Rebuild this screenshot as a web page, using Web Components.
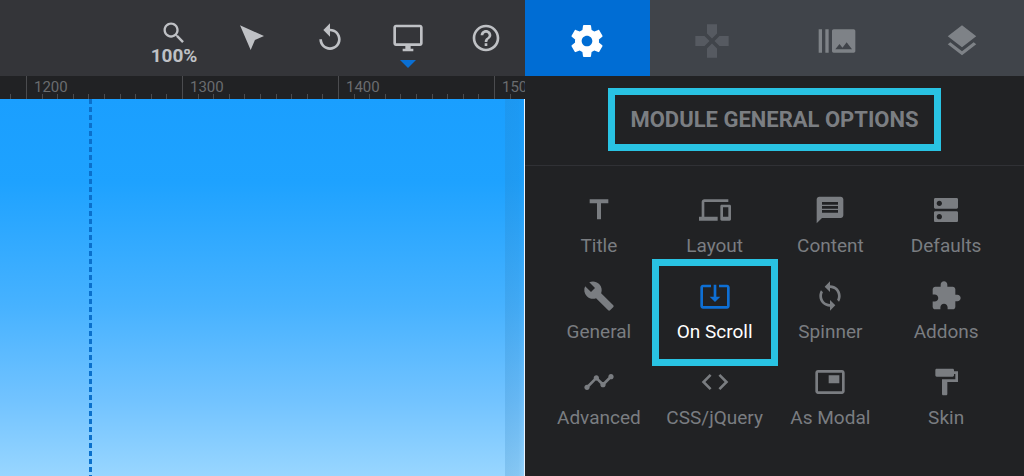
<!DOCTYPE html>
<html lang="en">
<head>
<meta charset="utf-8">
<title>Module editor</title>
<style>
html, body { height: 100%; margin: 0; }
body { background: #212224; font-family: Roboto, "Liberation Sans", sans-serif; }
</style>
</head>
<body>
<module-editor></module-editor>
<script>
const ICONS = {
  search: '<path d="M15.5 14h-.79l-.28-.27C15.41 12.59 16 11.11 16 9.5 16 5.91 13.09 3 9.5 3S3 5.91 3 9.5 5.91 16 9.5 16c1.61 0 3.09-.59 4.23-1.57l.27.28v.79l5 4.99L20.49 19l-4.99-5zm-6 0C7.01 14 5 11.99 5 9.5S7.01 5 9.5 5 14 7.01 14 9.5 11.99 14 9.5 14z"/>',
  cursor: '<path d="M3 2.5 21 10.5 14.2 13.5 11 21z"/>',
  undo: '<path d="M12 5V1L7 6l5 5V7c3.31 0 6 2.69 6 6s-2.69 6-6 6-6-2.69-6-6H4c0 4.42 3.58 8 8 8s8-3.58 8-8-3.58-8-8-8z"/>',
  desktop: '<path d="M21 2H3c-1.1 0-2 .9-2 2v12c0 1.1.9 2 2 2h7v2H8v2h8v-2h-2v-2h7c1.1 0 2-.9 2-2V4c0-1.1-.9-2-2-2zm0 14H3V4h18v12z"/>',
  help: '<path d="M11 18h2v-2h-2v2zm1-16C6.48 2 2 6.48 2 12s4.48 10 10 10 10-4.48 10-10S17.52 2 12 2zm0 18c-4.41 0-8-3.59-8-8s3.59-8 8-8 8 3.59 8 8-3.59 8-8 8zm0-14c-2.21 0-4 1.79-4 4h2c0-1.1.9-2 2-2s2 .9 2 2c0 2-3 1.75-3 5h2c0-2.25 3-2.5 3-5 0-2.21-1.79-4-4-4z"/>',
  gear: '<path d="M19.14 12.94c.04-.3.06-.61.06-.94 0-.32-.02-.64-.07-.94l2.03-1.58c.18-.14.23-.41.12-.61l-1.92-3.32c-.12-.22-.37-.29-.59-.22l-2.39.96c-.5-.38-1.03-.7-1.62-.94l-.36-2.54c-.04-.24-.24-.41-.48-.41h-3.84c-.24 0-.43.17-.47.41l-.36 2.54c-.59.24-1.13.57-1.62.94l-2.39-.96c-.22-.08-.47 0-.59.22L2.74 8.87c-.12.21-.08.47.12.61l2.03 1.58c-.05.3-.09.63-.09.94s.02.64.07.94l-2.03 1.58c-.18.14-.23.41-.12.61l1.92 3.32c.12.22.37.29.59.22l2.39-.96c.5.38 1.03.7 1.62.94l.36 2.54c.05.24.24.41.48.41h3.84c.24 0 .44-.17.47-.41l.36-2.54c.59-.24 1.13-.56 1.62-.94l2.39.96c.22.08.47 0 .59-.22l1.92-3.32c.12-.22.07-.47-.12-.61l-2.01-1.58zM12 15.2c-1.77 0-3.2-1.43-3.2-3.2s1.43-3.2 3.2-3.2 3.2 1.43 3.2 3.2-1.43 3.2-3.2 3.2z"/>',
  gamepad: '<path d="M15 7.5V2H9v5.5l3 3 3-3zM7.5 9H2v6h5.5l3-3-3-3zM9 16.5V22h6v-5.5l-3-3-3 3zM16.5 9l-3 3 3 3H22V9h-5.5z"/>',
  slides: '<path d="M1 5h2v14H1zm4 0h2v14H5zm17 0H10c-.55 0-1 .45-1 1v12c0 .55.45 1 1 1h12c.55 0 1-.45 1-1V6c0-.55-.45-1-1-1zM11 17l2.5-3.15L15.29 16l2.5-3.22L21 17H11z"/>',
  layers: '<path d="M11.99 18.54l-7.37-5.73L3 14.07l9 7 9-7-1.63-1.27-7.38 5.74zM12 16l7.36-5.73L21 9l-9-7-9 7 1.63 1.27L12 16z"/>',
  title: '<path d="M5 4v3h5.5v12h3V7H19V4z"/>',
  devices: '<path d="M4 6h18V4H4c-1.1 0-2 .9-2 2v11H0v3h14v-3H4V6zm19 2h-6c-.55 0-1 .45-1 1v10c0 .55.45 1 1 1h6c.55 0 1-.45 1-1V9c0-.55-.45-1-1-1zm-1 9h-4v-7h4v7z"/>',
  message: '<path d="M20 2H4c-1.1 0-1.99.9-1.99 2L2 22l4-4h14c1.1 0 2-.9 2-2V4c0-1.1-.9-2-2-2zm-2 12H6v-2h12v2zm0-3H6V9h12v2zm0-3H6V6h12v2z"/>',
  dns: '<path d="M20 13H4c-.55 0-1 .45-1 1v6c0 .55.45 1 1 1h16c.55 0 1-.45 1-1v-6c0-.55-.45-1-1-1zM7 19c-1.1 0-2-.9-2-2s.9-2 2-2 2 .9 2 2-.9 2-2 2zM20 3H4c-.55 0-1 .45-1 1v6c0 .55.45 1 1 1h16c.55 0 1-.45 1-1V4c0-.55-.45-1-1-1zM7 9c-1.1 0-2-.9-2-2s.9-2 2-2 2 .9 2 2-.9 2-2 2z"/>',
  wrench: '<path d="M22.7 19l-9.1-9.1c.9-2.3.4-5-1.5-6.9-2-2-5-2.4-7.4-1.3L9 6 6 9 1.6 4.7C.4 7.1.9 10.1 2.9 12.1c1.9 1.9 4.6 2.4 6.9 1.5l9.1 9.1c.4.4 1 .4 1.4 0l2.3-2.3c.5-.4.5-1.1.1-1.4z"/>',
  scroll: '<path d="M12 16.5l4-4h-3v-9h-2v9H8l4 4zm9-13h-6v1.99h6v14.03H3V5.49h6V3.5H3c-1.1 0-2 .9-2 2v14c0 1.1.9 2 2 2h18c1.1 0 2-.9 2-2v-14c0-1.1-.9-2-2-2z"/>',
  sync: '<path d="M12 4V1L8 5l4 4V6c3.31 0 6 2.69 6 6 0 1.01-.25 1.97-.7 2.8l1.46 1.46C19.54 15.03 20 13.57 20 12c0-4.42-3.58-8-8-8zm0 14c-3.31 0-6-2.69-6-6 0-1.01.25-1.97.7-2.8L5.24 7.74C4.46 8.97 4 10.43 4 12c0 4.42 3.58 8 8 8v3l4-4-4-4v3z"/>',
  puzzle: '<path d="M20.5 11H19V7c0-1.1-.9-2-2-2h-4V3.5C13 2.12 11.88 1 10.5 1S8 2.12 8 3.5V5H4c-1.1 0-1.99.9-1.99 2v3.8H3.5c1.49 0 2.7 1.21 2.7 2.7s-1.21 2.7-2.7 2.7H2V20c0 1.1.9 2 2 2h3.8v-1.5c0-1.49 1.21-2.7 2.7-2.7 1.49 0 2.7 1.21 2.7 2.7V22H17c1.1 0 2-.9 2-2v-4h1.5c1.38 0 2.5-1.12 2.5-2.5S21.88 11 20.5 11z"/>',
  timeline: '<path d="M23 8c0 1.1-.9 2-2 2-.18 0-.35-.02-.51-.07l-3.56 3.55c.05.16.07.34.07.52 0 1.1-.9 2-2 2s-2-.9-2-2c0-.18.02-.36.07-.52l-2.55-2.55c-.16.05-.34.07-.52.07s-.36-.02-.52-.07l-4.55 4.56c.05.16.07.33.07.51 0 1.1-.9 2-2 2s-2-.9-2-2 .9-2 2-2c.18 0 .35.02.51.07l4.56-4.55C8.02 9.36 8 9.18 8 9c0-1.1.9-2 2-2s2 .9 2 2c0 .18-.02.36-.07.52l2.55 2.55c.16-.05.34-.07.52-.07s.36.02.52.07l3.55-3.56C19.02 8.35 19 8.18 19 8c0-1.1.9-2 2-2s2 .9 2 2z"/>',
  code: '<path d="M9.4 16.6L4.8 12l4.6-4.6L8 6l-6 6 6 6 1.4-1.4zm5.2 0l4.6-4.6-4.6-4.6L16 6l6 6-6 6-1.4-1.4z"/>',
  modal: '<path d="M19 7h-8v6h8V7zm2-4H3c-1.1 0-2 .9-2 2v14c0 1.1.9 1.98 2 1.98h18c1.1 0 2-.88 2-1.98V5c0-1.1-.9-2-2-2zm0 16.01H3V4.98h18v14.03z"/>',
  paint: '<path d="M18 4V3c0-.55-.45-1-1-1H5c-.55 0-1 .45-1 1v4c0 .55.45 1 1 1h12c.55 0 1-.45 1-1V6h1v4H9v11c0 .55.45 1 1 1h2c.55 0 1-.45 1-1v-9h8V4h-3z"/>'
};

const define = (name, render) => customElements.define(name, class extends HTMLElement {
  connectedCallback() {
    if (!this.shadowRoot) this.attachShadow({ mode: 'open' }).innerHTML = render(this);
  }
});

const RESET = 'button { font: inherit; color: inherit; background: none; border: 0; margin: 0; padding: 0; cursor: pointer; }';

define('ui-icon', el => `
  <style>
    :host { display: block; width: var(--icon-size, 32px); height: var(--icon-size, 32px); }
    svg { display: block; width: 100%; height: 100%; fill: currentColor; }
  </style>
  <svg viewBox="0 0 24 24" aria-hidden="true">${ICONS[el.getAttribute('name')]}</svg>`);

define('tool-button', el => `
  <style>
    ${RESET}
    :host { display: block; width: 78px; height: 76px; color: #bfc1c5; --icon-size: 32px; }
    :host([name=search]) { --icon-size: 28px; }
    button { position: relative; display: flex; flex-direction: column; align-items: center; justify-content: center; width: 100%; height: 100%; font-size: 19px; line-height: 18px; font-weight: 700; }
    :host([name=search]) button { justify-content: flex-start; padding-top: 19px; }
    .marker { position: absolute; bottom: 8px; border: 8px solid transparent; border-bottom: 0; border-top-color: #0a6fd3; }
  </style>
  <button type="button" aria-label="${el.getAttribute('label')}">
    <ui-icon name="${el.getAttribute('name')}"></ui-icon><slot></slot>
    ${el.hasAttribute('selected') ? '<span class="marker"></span>' : ''}
  </button>`);

define('tool-bar', () => `
  <style>:host { display: flex; justify-content: flex-end; height: 76px; background: #343539; }</style>
  <slot></slot>`);

define('ruler-bar', () => `
  <style>
    :host { display: block; height: 23px; overflow: hidden; background: #212224; color: #6a6c6f; }
    .track { display: flex; height: 100%; margin-left: -130px; }
    .unit { position: relative; flex: 0 0 156px; display: grid; grid-template-columns: repeat(10, 1fr); align-items: end; }
    i { height: 5px; border-left: 1px solid #4b4c4f; }
    i:first-child { height: 23px; }
    span { position: absolute; left: 8px; top: 2px; font: 15px/18px Roboto, sans-serif; }
  </style>
  <div class="track">${['', 1200, 1300, 1400, 1500].map(n =>
    `<div class="unit">${'<i></i>'.repeat(10)}${n ? `<span>${n}</span>` : ''}</div>`).join('')}</div>`);

define('design-canvas', () => `
  <style>
    :host { display: flex; justify-content: space-between; flex: 1; border-right: 1px solid #e8f4ff;
      background: linear-gradient(#1a9fff 0%, #1ea2ff 22%, #47b2ff 55%, #72c3ff 80%, #98d6ff 100%); }
    .guide { width: 3px; margin-left: 89px; background: repeating-linear-gradient(#0a70cc 0 5px, transparent 5px 8px); }
    .edge { width: 19px; background: linear-gradient(90deg, rgba(40, 120, 180, .2), rgba(40, 120, 180, .16) 70%, rgba(40, 120, 180, .04)); }
  </style>
  <div class="guide"></div><div class="edge"></div>`);

define('panel-tab', el => `
  <style>
    ${RESET}
    :host { display: block; flex: 1; background: #40444a; color: #7e8287; --icon-size: 40px; }
    :host([selected]) { background: #006dd4; color: #fff; }
    :host([disabled]) { color: #565a61; }
    :host([name=layers]) { --icon-size: 38px; }
    button { display: flex; align-items: center; justify-content: center; width: 100%; height: 76px; padding-top: 6px; }
  </style>
  <button type="button" role="tab" aria-label="${el.getAttribute('label')}" aria-selected="${el.hasAttribute('selected')}">
    <ui-icon name="${el.getAttribute('name')}"></ui-icon>
  </button>`);

define('panel-heading', () => `
  <style>
    :host { display: flex; justify-content: center; padding: 12px 0 14px; border-bottom: 1px solid #303135; }
    h2 { margin: 0; padding: 11px 15px; border: 7px solid #29c3e3; color: #7b7e82; font-size: 22px; line-height: 27px; font-weight: 700; }
  </style>
  <h2><slot></slot></h2>`);

define('option-item', el => `
  <style>
    ${RESET}
    :host { display: block; position: relative; color: #7a7d81; }
    button { display: flex; flex-direction: column; align-items: center; gap: 8px; width: 100%; height: 86px; padding-top: 13px; font-size: 19px; line-height: 24px; white-space: nowrap; }
    :host([selected]) { color: #fff; }
    :host([selected]) ui-icon { color: #0e6fd4; }
    .frame { position: absolute; inset: -8px -5px -13px; border: 7px solid #29c3e3; pointer-events: none; z-index: 1; }
  </style>
  <button type="button"><ui-icon name="${el.getAttribute('name')}"></ui-icon><span><slot></slot></span></button>
  ${el.hasAttribute('selected') ? '<div class="frame"></div>' : ''}`);

define('option-grid', () => `
  <style>:host { display: grid; grid-template-columns: repeat(4, 1fr); padding: 15px 20px 15px 16px; }</style>
  <slot></slot>`);

define('module-editor', () => `
  <style>
    :host { display: grid; grid-template-columns: 525fr 499fr; min-height: 100%; }
    .work { display: flex; flex-direction: column; min-width: 0; overflow: hidden; }
    .panel { min-width: 0; background: #212224; }
    .tabs { display: flex; }
  </style>
  <main class="work">
    <tool-bar>
      <tool-button name="search" label="Zoom 100%">100%</tool-button>
      <tool-button name="cursor" label="Select"></tool-button>
      <tool-button name="undo" label="Undo"></tool-button>
      <tool-button name="desktop" label="Desktop view" selected></tool-button>
      <tool-button name="help" label="Help"></tool-button>
    </tool-bar>
    <ruler-bar></ruler-bar>
    <design-canvas></design-canvas>
  </main>
  <aside class="panel">
    <div class="tabs" role="tablist">
      <panel-tab name="gear" label="Module options" selected></panel-tab>
      <panel-tab name="gamepad" label="Navigation" disabled></panel-tab>
      <panel-tab name="slides" label="Slides"></panel-tab>
      <panel-tab name="layers" label="Layers"></panel-tab>
    </div>
    <panel-heading>MODULE GENERAL OPTIONS</panel-heading>
    <option-grid>
      <option-item name="title">Title</option-item>
      <option-item name="devices">Layout</option-item>
      <option-item name="message">Content</option-item>
      <option-item name="dns">Defaults</option-item>
      <option-item name="wrench">General</option-item>
      <option-item name="scroll" selected>On Scroll</option-item>
      <option-item name="sync">Spinner</option-item>
      <option-item name="puzzle">Addons</option-item>
      <option-item name="timeline">Advanced</option-item>
      <option-item name="code">CSS/jQuery</option-item>
      <option-item name="modal">As Modal</option-item>
      <option-item name="paint">Skin</option-item>
    </option-grid>
  </aside>`);
</script>
</body>
</html>
